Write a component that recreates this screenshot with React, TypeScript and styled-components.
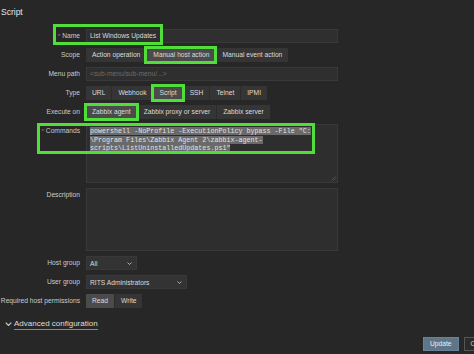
import React from 'react';
import styled, { createGlobalStyle } from 'styled-components';

const Global = createGlobalStyle`
  html, body { margin: 0; padding: 0; background: #272727; }
  body { font-family: 'Liberation Sans', Arial, sans-serif; }
`;

const GREEN = '#52de3a';

const Page = styled.div`
  position: relative;
  width: 474px;
  height: 354px;
  overflow: hidden;
  background: #272727;
  color: #cfcfcf;
  font-size: 6.7px;
`;

const Title = styled.div`
  height: 24px;
  line-height: 24px;
  padding-left: 1px;
  font-size: 8.5px;
  color: #e4e4e4;
`;

const Form = styled.div`
  display: grid;
  grid-template-columns: 80px 252px;
  column-gap: 6px;
  row-gap: 5px;
  padding-top: 5px;
`;

const Label = styled.div`
  text-align: right;
  line-height: 14px;
  height: 14px;
  white-space: nowrap;
  color: #cbcbcb;
`;

const Req = styled.span`
  color: #e15a5a;
  margin-right: 2px;
  font-size: 6px;
`;

const Field = styled.div`
  display: flex;
  align-items: flex-start;
  min-height: 14px;
`;

const Input = styled.div<{ $placeholder?: boolean }>`
  box-sizing: border-box;
  width: 252px;
  height: 14px;
  line-height: 12px;
  padding: 0 3px;
  background: #2f2f2f;
  border: 1px solid #393939;
  color: ${(p) => (p.$placeholder ? '#6c6c6c' : '#dadada')};
  white-space: nowrap;
`;

const TextArea = styled.div<{ $h: number }>`
  position: relative;
  box-sizing: border-box;
  width: 252px;
  height: ${(p) => p.$h}px;
  padding: 2px 3px;
  background: #2e2e2e;
  border: 1px solid #393939;
`;

const Code = styled.div`
  font-family: 'Liberation Mono', 'Courier New', monospace;
  font-size: 6.7px;
  line-height: 8.5px;
  color: #e2e2e2;
  white-space: pre;
`;

const Sel = styled.span`
  background: #6a6a6a;
`;

const Resize = styled.svg`
  position: absolute;
  right: 1px;
  bottom: 1px;
`;

const Segmented = styled.div`
  display: inline-flex;
  height: 14px;
  background: #353535;
`;

const Seg = styled.div<{ $on?: boolean; $mark?: boolean }>`
  position: relative;
  z-index: ${(p) => (p.$mark ? 2 : 0)};
  padding: 0 6px;
  line-height: 14px;
  white-space: nowrap;
  color: #dcdcdc;
  background: ${(p) => (p.$on ? '#4b4b4b' : '#353535')};
  & + & {
    border-left: 1px solid #2b2b2b;
  }
  ${(p) => (p.$mark ? `outline: 3px solid ${GREEN}; outline-offset: -1px;` : '')}
`;

const Select = styled.div<{ $w: number }>`
  box-sizing: border-box;
  width: ${(p) => p.$w}px;
  height: 14px;
  display: flex;
  align-items: center;
  justify-content: space-between;
  padding: 0 4px 0 3px;
  background: #333333;
  border: 1px solid #383838;
  color: #dcdcdc;
  white-space: nowrap;
`;

const Advanced = styled.div`
  display: flex;
  align-items: center;
  gap: 2px;
  height: 14px;
  margin-top: 9px;
  padding-left: 5px;
`;

const AdvText = styled.span`
  font-size: 8px;
  line-height: 10px;
  color: #dedede;
  border-bottom: 1px solid #8a8a8a;
`;

const Footer = styled.div`
  display: flex;
  gap: 5px;
  margin-top: 6px;
  padding-left: 423px;
`;

const Btn = styled.div<{ $primary?: boolean }>`
  box-sizing: border-box;
  height: 14px;
  line-height: 12px;
  padding: 0 6px;
  white-space: nowrap;
  color: ${(p) => (p.$primary ? '#e8eef3' : '#cfcfcf')};
  background: ${(p) => (p.$primary ? '#5f7689' : '#2b2b2b')};
  border: 1px solid ${(p) => (p.$primary ? '#6a8296' : '#555')};
`;

const Mark = styled.div<{ $x: number; $y: number; $w: number; $h: number }>`
  position: absolute;
  left: ${(p) => p.$x}px;
  top: ${(p) => p.$y}px;
  width: ${(p) => p.$w}px;
  height: ${(p) => p.$h}px;
  box-sizing: border-box;
  border: 3px solid ${GREEN};
  pointer-events: none;
  z-index: 3;
`;

const Chevron = ({ size = 5 }: { size?: number }) => (
  <svg width={size} height={size * 0.6} viewBox="0 0 10 6">
    <polyline points="1,1 5,5 9,1" fill="none" stroke="#cfcfcf" strokeWidth="1.6" />
  </svg>
);

export default function App() {
  return (
    <Page>
      <Global />
      <Title>Script</Title>
      <Form>
        <Label><Req>*</Req>Name</Label>
        <Field><Input>List Windows Updates</Input></Field>

        <Label>Scope</Label>
        <Field>
          <Segmented>
            <Seg>Action operation</Seg>
            <Seg $on $mark>Manual host action</Seg>
            <Seg>Manual event action</Seg>
          </Segmented>
        </Field>

        <Label>Menu path</Label>
        <Field><Input $placeholder>&lt;sub-menu/sub-menu/...&gt;</Input></Field>

        <Label>Type</Label>
        <Field>
          <Segmented>
            <Seg>URL</Seg>
            <Seg>Webhook</Seg>
            <Seg $on $mark>Script</Seg>
            <Seg>SSH</Seg>
            <Seg>Telnet</Seg>
            <Seg>IPMI</Seg>
          </Segmented>
        </Field>

        <Label>Execute on</Label>
        <Field>
          <Segmented>
            <Seg $on $mark>Zabbix agent</Seg>
            <Seg>Zabbix proxy or server</Seg>
            <Seg>Zabbix server</Seg>
          </Segmented>
        </Field>

        <Label><Req>*</Req>Commands</Label>
        <Field>
          <TextArea $h={59}>
            <Code>
              <Sel>powershell -NoProfile -ExecutionPolicy bypass -File "C:</Sel>{'\n'}
              <Sel>\Program Files\Zabbix Agent 2\zabbix-agent-</Sel>{'\n'}
              <Sel>scripts\ListUninstalledUpdates.ps1"</Sel>
            </Code>
            <Resize width="5" height="5" viewBox="0 0 5 5">
              <line x1="0.5" y1="4.5" x2="4.5" y2="0.5" stroke="#5a5a5a" strokeWidth="0.8" />
              <line x1="2.5" y1="4.5" x2="4.5" y2="2.5" stroke="#5a5a5a" strokeWidth="0.8" />
            </Resize>
          </TextArea>
        </Field>

        <Label>Description</Label>
        <Field><TextArea $h={63} /></Field>

        <Label>Host group</Label>
        <Field>
          <Select $w={51}><span>All</span><Chevron /></Select>
        </Field>

        <Label>User group</Label>
        <Field>
          <Select $w={101}><span>RITS Administrators</span><Chevron /></Select>
        </Field>

        <Label>Required host permissions</Label>
        <Field>
          <Segmented>
            <Seg $on>Read</Seg>
            <Seg>Write</Seg>
          </Segmented>
        </Field>
      </Form>

      <Advanced>
        <Chevron size={7} />
        <AdvText>Advanced configuration</AdvText>
      </Advanced>

      <Footer>
        <Btn $primary>Update</Btn>
        <Btn>Clone</Btn>
      </Footer>

      <Mark $x={53} $y={24} $w={110} $h={21} />
      <Mark $x={37} $y={123} $w={278} $h={31} />
    </Page>
  );
}
